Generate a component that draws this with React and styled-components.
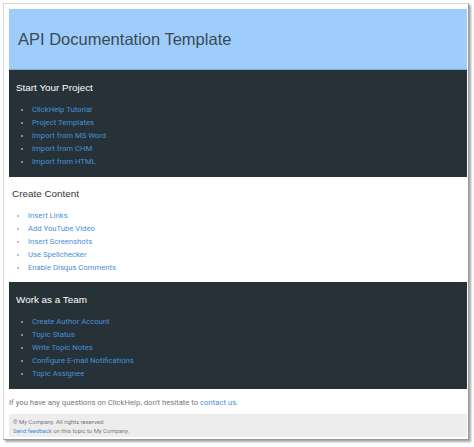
import styled, { createGlobalStyle } from 'styled-components';

const GlobalStyle = createGlobalStyle`
  html, body {
    margin: 0;
    padding: 0;
    background: #ffffff;
  }
  body {
    font-family: Roboto, "Liberation Sans", Arial, sans-serif;
  }
`;

const sections = [
  {
    title: 'Start Your Project',
    dark: true,
    links: ['ClickHelp Tutorial', 'Project Templates', 'Import from MS Word', 'Import from CHM', 'Import from HTML'],
  },
  {
    title: 'Create Content',
    dark: false,
    links: ['Insert Links', 'Add YouTube Video', 'Insert Screenshots', 'Use Spellchecker', 'Enable Disqus Comments'],
  },
  {
    title: 'Work as a Team',
    dark: true,
    links: ['Create Author Account', 'Topic Status', 'Write Topic Notes', 'Configure E-mail Notifications', 'Topic Assignee'],
  },
];

function App() {
  return (
    <>
      <GlobalStyle />
      <Page>
        <Frame>
          <Header>
            <Title>API Documentation Template</Title>
          </Header>

          {sections.map((s) => (
            <Section key={s.title} $dark={s.dark}>
              <SectionTitle $dark={s.dark}>{s.title}</SectionTitle>
              <LinkList>
                {s.links.map((l) => (
                  <li key={l}>
                    <A href="#">{l}</A>
                  </li>
                ))}
              </LinkList>
            </Section>
          ))}

          <Question>
            If you have any questions on ClickHelp, don't hesitate to <A href="#">contact us</A>.
          </Question>

          <Footer>
            <div>© My Company. All rights reserved.</div>
            <div>
              <A href="#">Send feedback</A> on this topic to My Company.
            </div>
          </Footer>
        </Frame>
      </Page>
    </>
  );
}

export default App;

const Page = styled.div`
  padding: 3px 0 0 3px;
  width: 474px;
  height: 447px;
  box-sizing: border-box;
`;

const Frame = styled.div`
  width: 466px;
  box-sizing: border-box;
  padding: 5px 1px 2px 5px;
  background: #fff;
  border: 1px solid #d8d8d8;
  border-right-color: #9a9a9a;
  border-bottom-color: #9a9a9a;
  box-shadow: 2px 2px 2px rgba(0, 0, 0, 0.35);
`;

const Header = styled.div`
  height: 61px;
  background-color: #9ecdfc;
  display: flex;
  align-items: center;
  padding-left: 9px;
  border-bottom: 1px solid #7fa9cf;
  box-sizing: border-box;
`;

const Title = styled.h1`
  margin: 0;
  font-family: "Liberation Sans", Arial, sans-serif;
  font-weight: normal;
  font-size: 16.5px;
  color: #3b4a55;
  padding-top: 1px;
`;

const Section = styled.div`
  background-color: ${(p) => (p.$dark ? '#263238' : '#ffffff')};
  padding: ${(p) => (p.$dark ? '12px 7px 8px' : '11px 3px 8px')};
  height: ${(p) => (p.$dark ? '107px' : '105px')};
  box-sizing: border-box;
`;

const SectionTitle = styled.h2`
  margin: 0 0 9px;
  font-family: "Liberation Sans", Arial, sans-serif;
  font-weight: normal;
  font-size: 9.9px;
  line-height: 12px;
  color: ${(p) => (p.$dark ? '#ffffff' : '#333333')};
`;

const LinkList = styled.ul`
  margin: 0;
  padding-left: 16px;
  list-style: disc;
  color: #a4adb3;

  li {
    font-size: 7.7px;
    line-height: 13px;
  }

  li::marker {
    font-size: 7.5px;
  }
`;

const A = styled.a`
  color: #4a8fd6;
  text-decoration: none;
`;

const Question = styled.p`
  margin: 0;
  padding: 7px 0 5px;
  font-size: 7.7px;
  line-height: 13px;
  color: #777;
`;

const Footer = styled.div`
  background: #ededed;
  padding: 4px 4px 2px;
  font-size: 5.9px;
  line-height: 8.5px;
  color: #777;
`;
